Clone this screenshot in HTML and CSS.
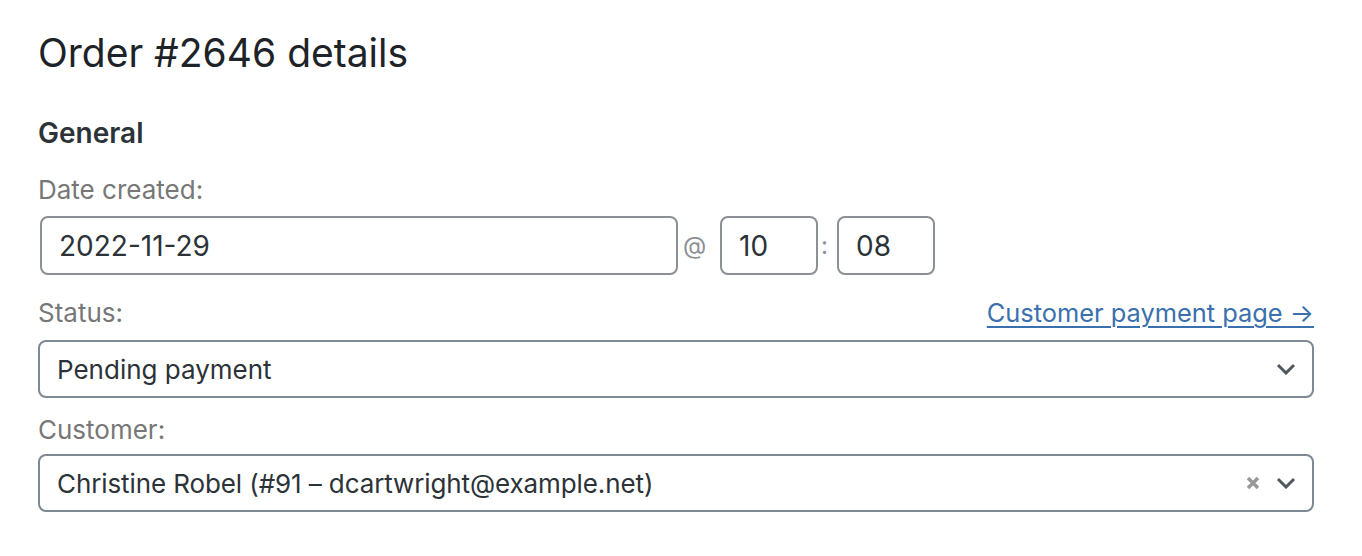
FILE: index.html
```html
<!DOCTYPE html>
<html>
<head>
<meta charset="utf-8">
<link rel="stylesheet" href="styles.css">
</head>
<body>
<div class="panel">
  <h2 class="title">Order #2646 details</h2>
  <h3 class="section">General</h3>
  <div class="field">
    <label class="label label-date">Date created:</label>
    <div class="date-row">
      <div class="input input-date">2022-11-29</div>
      <span class="sep sep-at">@</span>
      <div class="input input-time">10</div>
      <span class="sep sep-colon">:</span>
      <div class="input input-time">08</div>
    </div>
  </div>
  <div class="field">
    <div class="label-row label-status">
      <label class="label">Status:</label>
      <a class="link" href="#">Customer payment page →</a>
    </div>
    <div class="select">
      <span class="select-text">Pending payment</span>
      <span class="select-icons">
        <svg class="chev" width="20" height="12" viewBox="0 0 20 12"><path d="M2 2 L10 10 L18 2" fill="none" stroke="#50575e" stroke-width="3"/></svg>
      </span>
    </div>
  </div>
  <div class="field">
    <div class="label-row label-customer">
      <label class="label">Customer:</label>
    </div>
    <div class="select">
      <span class="select-text customer-text">Christine Robel (#91 – dcartwright@example.net)</span>
      <span class="select-icons">
        <svg class="clear" width="14" height="14" viewBox="0 0 14 14"><path d="M2 2 L12 12 M12 2 L2 12" fill="none" stroke="#999" stroke-width="3.4"/></svg>
        <svg class="chev" width="20" height="12" viewBox="0 0 20 12"><path d="M2 2 L10 10 L18 2" fill="none" stroke="#50575e" stroke-width="3"/></svg>
      </span>
    </div>
  </div>
</div>
</body>
</html>
```

FILE: styles.css
```css
html, body {
  margin: 0;
  padding: 0;
  background: #fff;
}
body {
  font-family: Inter, "Noto Sans", "Liberation Sans", sans-serif;
  color: #1d2327;
}
.panel {
  width: 1276px;
  padding: 25px 0 0 38px;
}
.title {
  margin: 0;
  font-size: 39px;
  line-height: 56px;
  font-weight: 400;
  color: #1d2327;
}
.section {
  margin: 32px 0 0;
  font-size: 28px;
  line-height: 40px;
  font-weight: 600;
  color: #2c3338;
}
.label {
  font-size: 26px;
  line-height: 36px;
  color: #777;
}
.label-date {
  display: block;
  margin-top: 19px;
}
.date-row {
  display: flex;
  align-items: center;
  margin-top: 8px;
  padding-left: 2px;
}
.input {
  box-sizing: border-box;
  height: 59px;
  border: 2px solid #8c8f94;
  border-radius: 8px;
  display: flex;
  align-items: center;
  padding-left: 17px;
  font-size: 28px;
  color: #2c3338;
}
.input-date {
  width: 638px;
}
.input-time {
  width: 98px;
}
.sep {
  font-size: 24px;
  color: #8c8f94;
}
.sep-at {
  width: 42px;
  padding-left: 5px;
  box-sizing: border-box;
}
.sep-colon {
  width: 19px;
  padding-left: 3px;
  box-sizing: border-box;
}
.label-row {
  display: flex;
  justify-content: space-between;
  align-items: baseline;
}
.label-status {
  margin-top: 20px;
}
.label-customer {
  margin-top: 14px;
}
.link {
  font-size: 25.4px;
  line-height: 36px;
  color: #3a70ad;
  text-decoration: underline;
  text-underline-offset: 4px;
  text-decoration-thickness: 2px;
}
.select {
  box-sizing: border-box;
  height: 58px;
  margin-top: 9px;
  border: 2px solid #7e8993;
  border-radius: 8px;
  display: flex;
  align-items: center;
  justify-content: space-between;
  padding: 0 16px 0 17px;
  font-size: 26px;
  color: #2c3338;
}
.label-customer + .select {
  margin-top: 6px;
}
.select-icons {
  display: flex;
  align-items: center;
  gap: 16px;
}
.customer-text {
  letter-spacing: -0.1px;
}
```
